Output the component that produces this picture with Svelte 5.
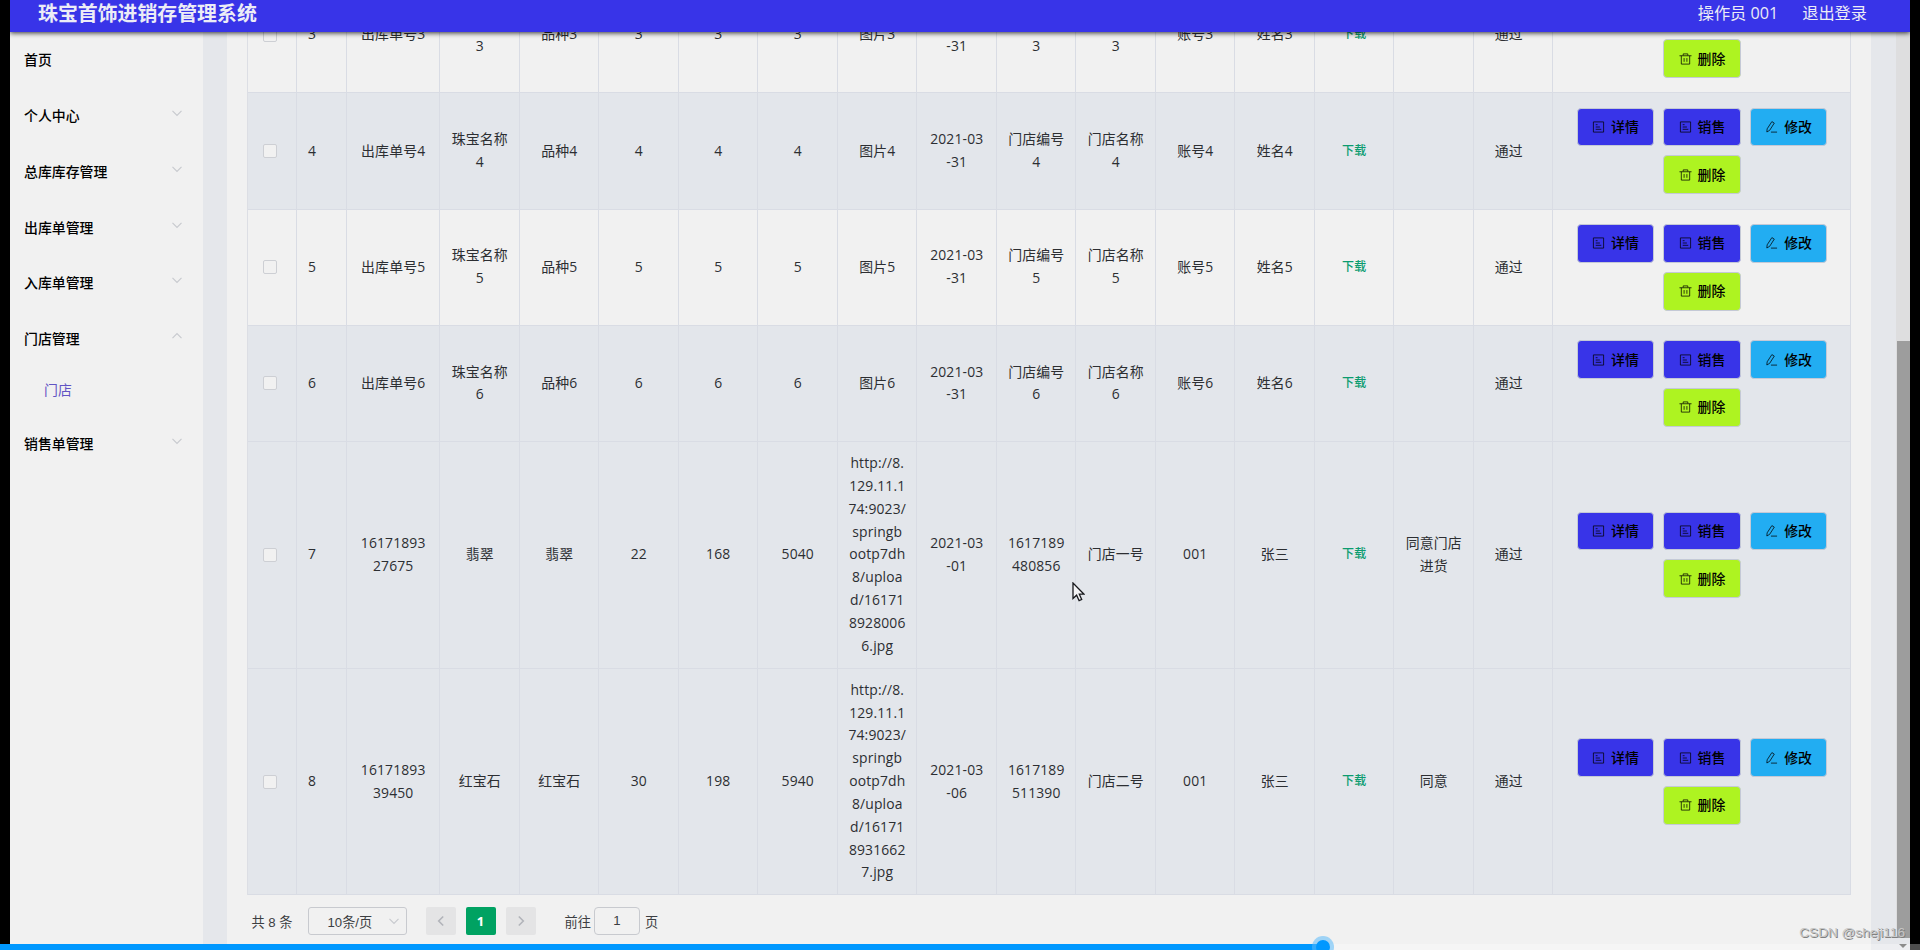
<script lang="ts">
  type Row = { id: number; cells: string[][]; tall?: boolean; striped?: boolean };

  const menu = [
    { name: "首页" },
    { name: "个人中心", arrow: "down" },
    { name: "总库库存管理", arrow: "down" },
    { name: "出库单管理", arrow: "down" },
    { name: "入库单管理", arrow: "down" },
    { name: "门店管理", arrow: "up", children: ["门店"] },
    { name: "销售单管理", arrow: "down" },
  ];

  const actions = [
    { name: "详情", icon: "doc", type: "primary" },
    { name: "销售", icon: "doc", type: "primary" },
    { name: "修改", icon: "edit", type: "info" },
    { name: "删除", icon: "trash", type: "danger" },
  ];

  function sample(n: number): Row {
    return {
      id: n,
      striped: n % 2 === 0,
      cells: [
        [`出库单号${n}`],
        ["珠宝名称", `${n}`],
        [`品种${n}`],
        [`${n}`],
        [`${n}`],
        [`${n}`],
        [`图片${n}`],
        ["2021-03", "-31"],
        ["门店编号", `${n}`],
        ["门店名称", `${n}`],
        [`账号${n}`],
        [`姓名${n}`],
        ["下载"],
        [],
        ["通过"],
      ],
    };
  }

  const rows: Row[] = [
    sample(3),
    sample(4),
    sample(5),
    sample(6),
    {
      id: 7,
      tall: true,
      striped: true,
      cells: [
        ["16171893", "27675"],
        ["翡翠"],
        ["翡翠"],
        ["22"],
        ["168"],
        ["5040"],
        ["http://8.", "129.11.1", "74:9023/", "springb", "ootp7dh", "8/uploa", "d/16171", "8928006", "6.jpg"],
        ["2021-03", "-01"],
        ["1617189", "480856"],
        ["门店一号"],
        ["001"],
        ["张三"],
        ["下载"],
        ["同意门店", "进货"],
        ["通过"],
      ],
    },
    {
      id: 8,
      tall: true,
      striped: true,
      cells: [
        ["16171893", "39450"],
        ["红宝石"],
        ["红宝石"],
        ["30"],
        ["198"],
        ["5940"],
        ["http://8.", "129.11.1", "74:9023/", "springb", "ootp7dh", "8/uploa", "d/16171", "8931662", "7.jpg"],
        ["2021-03", "-06"],
        ["1617189", "511390"],
        ["门店二号"],
        ["001"],
        ["张三"],
        ["下载"],
        ["同意"],
        ["通过"],
      ],
    },
  ];

  const played = 68.9;
</script>

{#snippet chevron(dir: string)}
  <svg class="chevron {dir}" viewBox="0 0 12 12" width="12" height="12">
    <path d="M1.5 3.8 6 8.3l4.5-4.5" />
  </svg>
{/snippet}

{#snippet icon(name: string)}
  <svg class="icon" viewBox="0 0 14 14" width="13" height="14">
    {#if name === "doc"}
      <path d="M1.5 1.5h11v11h-11z M4 4.5h2 M4 7h4.5 M4 9.5h6" />
    {:else if name === "edit"}
      <path d="M7.4 1.2 10 2.8 5 10.6 2 12.4l.3-3.4z M6.4 12.5h6.6" />
    {:else}
      <path d="M.5 3.5h13 M4.5 3.2V1.5h5v1.7 M2.5 3.5v9h9v-9 M5.5 6v4 M8.5 6v4" />
    {/if}
  </svg>
{/snippet}

<div class="screen">
  <header class="header">
    <h1 class="title">珠宝首饰进销存管理系统</h1>
    <div class="user">
      <span>操作员 001</span>
      <span>退出登录</span>
    </div>
  </header>

  <div class="body">
    <nav class="sidebar">
      {#each menu as item}
        <div class="menu-item">
          <span>{item.name}</span>
          {#if item.arrow}
            {@render chevron(item.arrow)}
          {/if}
        </div>
        {#each item.children ?? [] as child}
          <div class="menu-child">{child}</div>
        {/each}
      {/each}
    </nav>

    <main class="content">
      <div class="table">
        {#each rows as row}
          <div class="row" class:striped={row.striped} class:tall={row.tall}>
            <div class="cell"><span class="checkbox"></span></div>
            <div class="cell index">{row.id}</div>
            {#each row.cells as lines, i}
              <div class="cell" class:download={i === 12} class:status={i === 14}>
                {#each lines as line}
                  <span>{line}</span>
                {/each}
              </div>
            {/each}
            <div class="cell actions">
              {#each actions as action}
                <button class="btn {action.type}">
                  {@render icon(action.icon)}
                  <span>{action.name}</span>
                </button>
              {/each}
            </div>
          </div>
        {/each}
      </div>

      <div class="pagination">
        <span class="total">共 8 条</span>
        <div class="sizes">
          <span>10条/页</span>
          {@render chevron("down")}
        </div>
        <button class="page prev">{@render chevron("left")}</button>
        <button class="page active">1</button>
        <button class="page">{@render chevron("right")}</button>
        <span class="jump">前往</span>
        <span class="jump-input">1</span>
        <span>页</span>
      </div>
    </main>

    <div class="scrollbar"><div class="thumb"></div></div>
  </div>

  <svg class="cursor" viewBox="0 0 13 20" width="13" height="20">
    <path d="M1 1v15.5l3.6-3.3 2.5 5.5 2.6-1.2-2.4-5.3h4.8z" />
  </svg>
  <div class="watermark">CSDN @sheji116</div>
  <div class="player">
    <div class="played" style="width: {played}%"></div>
    <span class="knob"></span>
    <span class="scroll-down"></span>
  </div>
</div>

<style>
  :global(body) {
    overflow: hidden;
    background: #000;
  }
  .screen {
    position: relative;
    box-sizing: border-box;
    display: flex;
    flex-direction: column;
    width: 1920px;
    height: 950px;
    padding: 0 10px;
    overflow: hidden;
    background: #000;
    color: #2c2e32;
    font-family: "Open Sans", "Noto Sans CJK SC", sans-serif;
    font-size: 13.9px;
  }
  .header {
    position: relative;
    z-index: 2;
    display: flex;
    flex: none;
    align-items: center;
    justify-content: space-between;
    box-sizing: border-box;
    height: 32px;
    padding: 0 43px 5px 28px;
    background: #3834e8;
    box-shadow: 0 1px 5px rgba(0, 0, 0, 0.8);
    color: #ececf6;
  }
  .title {
    margin: 0;
    font-size: 19.9px;
    font-weight: 700;
    line-height: 26px;
  }
  .user {
    display: flex;
    gap: 24px;
    margin-top: -1px;
    font-size: 16.2px;
    line-height: 26px;
  }
  .body {
    display: flex;
    flex: 1;
    min-height: 0;
    overflow: hidden;
    background: #e5e7eb;
  }
  .sidebar {
    flex: none;
    width: 193px;
    background: #f1f1f1;
    color: #000;
    font-weight: 500;
  }
  .menu-item {
    display: flex;
    align-items: center;
    justify-content: space-between;
    height: 55.6px;
    padding: 0 20px 0 14px;
  }
  .menu-item:first-child {
    height: 52.6px;
    padding-bottom: 3px;
  }
  .menu-item:first-child {
    height: 53px;
    padding-bottom: 2.6px;
  }
  .menu-item .chevron {
    margin-top: -4px;
  }
  .menu-child {
    height: 49.5px;
    padding-left: 34px;
    color: #6254c4;
    font-weight: 400;
    line-height: 48px;
  }
  .chevron {
    fill: none;
    stroke: #c8cacf;
    stroke-width: 1.2;
  }
  .chevron.up {
    transform: rotate(180deg);
  }
  .chevron.left {
    transform: rotate(90deg);
  }
  .chevron.right {
    transform: rotate(-90deg);
  }
  .content {
    flex: none;
    box-sizing: border-box;
    width: 1644.5px;
    margin-left: 23.5px;
    padding: 0 20px;
    background: #f1f1f1;
  }
  .table {
    margin-top: -54.9px;
    border-left: 1px solid #dcdee4;
    letter-spacing: 0.15px;
  }
  .row {
    display: grid;
    grid-template-columns: 49.4px 50px 93.6px repeat(14, 79.5px) 298px;
    height: 116.25px;
  }
  .row.striped {
    background: #e3e6eb;
  }
  .row.tall {
    height: 226.6px;
  }
  .cell {
    display: flex;
    flex-direction: column;
    align-items: center;
    justify-content: center;
    box-sizing: border-box;
    border-right: 1px solid #d9dce4;
    border-bottom: 1px solid #d9dce4;
    line-height: 22.85px;
    white-space: nowrap;
  }
  .index {
    align-items: flex-start;
    padding-left: 11px;
  }
  .download {
    color: #0c9c70;
    font-size: 12px;
    font-weight: 500;
  }
  .status {
    padding-right: 9px;
  }
  .checkbox {
    box-sizing: border-box;
    width: 14px;
    height: 14px;
    margin-right: 3px;
    border: 1px solid #cdcfd4;
    border-radius: 2px;
    background: #f1f1f1;
  }
  .actions {
    flex-flow: row wrap;
    align-content: center;
    gap: 9px 9px;
  }
  .btn {
    display: flex;
    align-items: center;
    justify-content: center;
    gap: 6px;
    box-sizing: border-box;
    width: 77.6px;
    height: 38.8px;
    padding: 0;
    border: 1px solid #c4c9d6;
    border-radius: 4px;
    color: #000;
    font: 500 13.9px/20px "Open Sans", "Noto Sans CJK SC", sans-serif;
  }
  .primary {
    background: #3834e8;
  }
  .info {
    background: #22adf2;
  }
  .danger {
    background: #aef321;
  }
  .icon {
    fill: none;
    stroke: #000;
    stroke-opacity: 0.8;
  }
  .pagination {
    display: flex;
    align-items: center;
    height: 28px;
    margin: 12px 0 0 5px;
    color: #3c3e42;
    font-family: "Liberation Sans", "Noto Sans CJK SC", sans-serif;
    font-size: 13.2px;
  }
  .total {
    width: 56px;
  }
  .sizes {
    display: flex;
    align-items: center;
    justify-content: space-between;
    box-sizing: border-box;
    width: 99px;
    height: 28px;
    padding: 0 6px 0 19px;
    border: 1px solid #c8cacf;
    border-radius: 3px;
  }
  .page {
    display: flex;
    align-items: center;
    justify-content: center;
    width: 30px;
    height: 28px;
    margin-right: 10px;
    padding: 0;
    border: none;
    border-radius: 2px;
    background: #e4e4e5;
  }
  .page .chevron {
    stroke: #b2b4ba;
    stroke-width: 1.6;
  }
  .prev {
    margin-left: 19px;
  }
  .active {
    background: #00a262;
    color: #fff;
    font: 700 13px "Open Sans", sans-serif;
  }
  .jump {
    margin-left: 19px;
  }
  .jump-input {
    box-sizing: border-box;
    width: 46px;
    height: 28px;
    margin: 0 5px 0 3px;
    border: 1px solid #c8cacf;
    border-radius: 4px;
    line-height: 26px;
    text-align: center;
  }
  .scrollbar {
    display: flex;
    flex: none;
    box-sizing: border-box;
    width: 14px;
    height: 906px;
    margin-left: auto;
    padding: 309px 0 0 1px;
    background: #dededf;
  }
  .thumb {
    flex: 1;
    background: #9d9d9d;
  }
  .cursor {
    position: absolute;
    top: 582px;
    left: 1072px;
    fill: #f4f4f6;
    stroke: #17181c;
    stroke-width: 1.3;
  }
  .watermark {
    position: absolute;
    top: 924px;
    right: 15px;
    color: #c6c6c6;
    font: 13.6px/18px "Liberation Sans", sans-serif;
    text-shadow: 1px 1px 0 #808080;
  }
  .player {
    position: absolute;
    bottom: 0;
    left: 0;
    width: 100%;
    height: 6px;
    background: rgba(255, 255, 255, 0.3);
  }
  .played {
    height: 100%;
    background: #0098ff;
  }
  .knob {
    position: absolute;
    top: -4px;
    left: 1316px;
    width: 14px;
    height: 14px;
    border-radius: 50%;
    background: #0098ff;
    box-shadow: 0 0 0 4px rgba(90, 185, 250, 0.55);
  }
  .scroll-down {
    position: absolute;
    top: 0;
    left: 1899px;
    border: 4px solid transparent;
    border-top-color: #8c8c8c;
    border-bottom: 0;
  }
</style>
